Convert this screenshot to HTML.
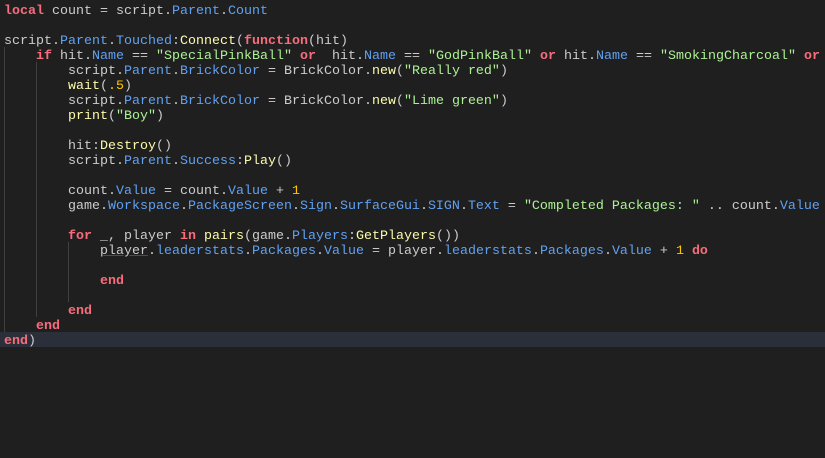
<!DOCTYPE html>
<html><head><meta charset="utf-8"><style>
body{margin:0;width:825px;height:458px;background:#1f1f1f;overflow:hidden;position:relative}
.code{position:absolute;left:4px;top:4px;font-family:"Liberation Mono",monospace;font-size:13.33px;line-height:15px;color:#cccccc;white-space:pre}
.k{color:#f86d7c;font-weight:bold}.p{color:#61a1f1}.s{color:#adf195}.m{color:#fdfbac}.n{color:#ffc600}
.u{text-decoration:underline;text-decoration-color:#e01010}
.hl{position:absolute;left:0;top:332px;width:825px;height:15px;background:#2a2f3a}
.g{position:absolute;width:1px;background:#404040}
</style></head><body>
<div class="hl"></div>
<div class="g" style="left:4px;top:47px;height:285px"></div>
<div class="g" style="left:36px;top:62px;height:255px"></div>
<div class="g" style="left:68px;top:242px;height:60px"></div>
<div class="code"><span class="k">local</span> count = script.<span class="p">Parent</span>.<span class="p">Count</span>

script.<span class="p">Parent</span>.<span class="p">Touched</span>:<span class="m">Connect</span>(<span class="k">function</span>(hit)
    <span class="k">if</span> hit.<span class="p">Name</span> == <span class="s">"SpecialPinkBall"</span> <span class="k">or</span>  hit.<span class="p">Name</span> == <span class="s">"GodPinkBall"</span> <span class="k">or</span> hit.<span class="p">Name</span> == <span class="s">"SmokingCharcoal"</span> <span class="k">or</span>
        script.<span class="p">Parent</span>.<span class="p">BrickColor</span> = BrickColor.<span class="m">new</span>(<span class="s">"Really red"</span>)
        <span class="m">wait</span>(<span class="n">.5</span>)
        script.<span class="p">Parent</span>.<span class="p">BrickColor</span> = BrickColor.<span class="m">new</span>(<span class="s">"Lime green"</span>)
        <span class="m">print</span>(<span class="s">"Boy"</span>)

        hit:<span class="m">Destroy</span>()
        script.<span class="p">Parent</span>.<span class="p">Success</span>:<span class="m">Play</span>()

        count.<span class="p">Value</span> = count.<span class="p">Value</span> + <span class="n">1</span>
        game.<span class="p">Workspace</span>.<span class="p">PackageScreen</span>.<span class="p">Sign</span>.<span class="p">SurfaceGui</span>.<span class="p">SIGN</span>.<span class="p">Text</span> = <span class="s">"Completed Packages: "</span> .. count.<span class="p">Value</span>

        <span class="k">for</span> _, player <span class="k">in</span> <span class="m">pairs</span>(game.<span class="p">Players</span>:<span class="m">GetPlayers</span>())
            <span class="u">player</span>.<span class="p">leaderstats</span>.<span class="p">Packages</span>.<span class="p">Value</span> = player.<span class="p">leaderstats</span>.<span class="p">Packages</span>.<span class="p">Value</span> + <span class="n">1</span> <span class="k">do</span>

            <span class="k">end</span>

        <span class="k">end</span>
    <span class="k">end</span>
<span class="k">end</span>)</div>
</body></html>
